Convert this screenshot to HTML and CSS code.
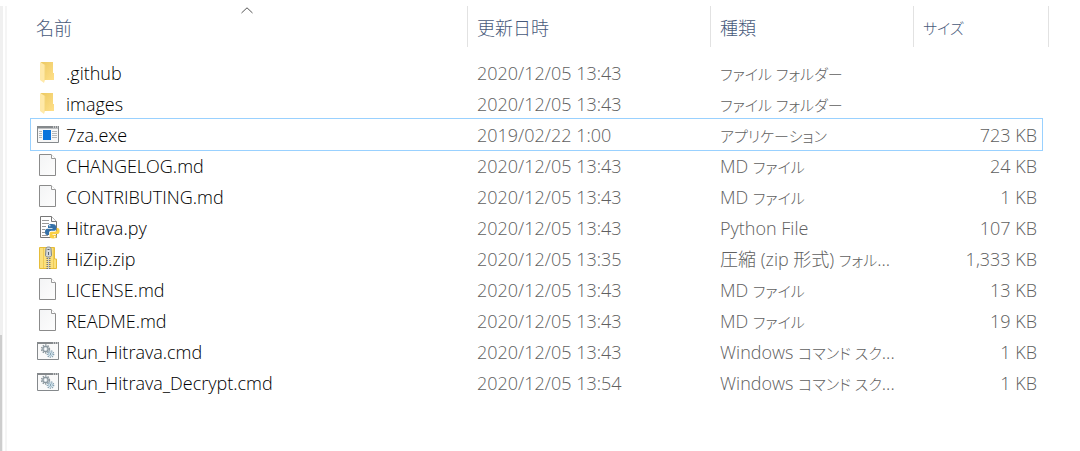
FILE: index.html
```html
<!DOCTYPE html>
<html lang="ja">
<head>
<meta charset="utf-8">
<title>ファイル一覧</title>
<link rel="stylesheet" href="styles.css">
</head>
<body>
<svg class="sprite" aria-hidden="true">
  <defs>
    <linearGradient id="fold" x1="0" x2="1" y1="0" y2="1"><stop offset="0" stop-color="#ecc962"/><stop offset="1" stop-color="#ffe08a"/></linearGradient>
    <linearGradient id="paper" x1="0" x2="1" y1="0" y2="1"><stop offset="0" stop-color="#f3f4f5"/><stop offset="1" stop-color="#fdfdfd"/></linearGradient>
  </defs>
  <symbol id="folder" viewBox="0 0 24 24">
    <path d="M4 2H16V13H17V20H6Z" fill="url(#fold)"/>
    <path d="M3 2L8 5V20L7 23L3 20Z" fill="#ffe9a9"/>
    <path d="M8 5V20" stroke="#f3d67c" fill="none"/>
  </symbol>
  <symbol id="doc" viewBox="0 0 24 24">
    <path d="M2.500 1.500H14L18.500 6V22.500H2.500Z" fill="url(#paper)" stroke="#8b8b8b"/>
    <path d="M14.500 1.500V5.500H18.500" fill="#fff" stroke="#9a9a9a"/>
  </symbol>
  <symbol id="exe" viewBox="0 0 24 24">
    <path d="M.5 4.500H21.500V20.500H.5Z" fill="#f7f7f7" stroke="#85898c"/>
    <path d="M0 4H22V6.500H0Z" fill="#85898c"/>
    <path d="M16 5h1M18 5h1M20 5h1" stroke="#fff"/>
    <path d="M2 9.500H5M2 11.500H5M2 13.500H5M2 15.500H5M15 9.500H20M15 11.500H20M15 13.500H20M15 15.500H20" stroke="#b5b8ba"/>
    <path d="M6 8H14V18H6Z" fill="#0a74dc"/>
  </symbol>
  <symbol id="py" viewBox="0 0 24 24">
    <path d="M3.500 1.500H14.500L19.500 6.500V22.500H3.500Z" fill="#fff" stroke="#777"/>
    <path d="M14.500 1.500V6.500H19.500" fill="#fff" stroke="#777"/>
    <path d="M5 5.500H12M5 8.500H12M5 11.500H9M5 14.500H8M5 17.500H8M5 20.500H11" stroke="#999"/>
    <path d="M15 9C11.500 9 11 10.200 11 11.500V13H15.500V13.800H10.200C8.500 13.800 8 15.500 8 17C8 18.700 8.700 20 10.200 20H12V17.800C12 16.500 13 15.700 14.200 15.700H17.500C18.600 15.700 19 15 19 14V11.500C19 9.800 17.500 9 15 9Z" fill="#3571a8"/>
    <circle cx="12.800" cy="10.800" r=".7" fill="#fff"/>
    <path d="M16 23.500C19 23.500 19.500 22.500 19.500 21.200V19.700H15.500V19H20.500C22 19 22.600 17.500 22.600 16C22.600 14.200 21.800 13 20.500 13H19.700V14.800C19.700 16 18.800 16.700 17.500 16.700H14.300C13.300 16.700 12.600 17.500 12.600 18.500V21.500C12.600 22.800 13.800 23.500 16 23.500Z" fill="#fbd043"/>
    <circle cx="17.700" cy="21.800" r=".7" fill="#fff"/>
  </symbol>
  <symbol id="zip" viewBox="0 0 24 24">
    <path d="M2.500 1.500H17.500V13H19.500V22.500H2.500Z" fill="#fbe07c" stroke="#e6bd3a"/>
    <path d="M6.500 2V22M16.500 2V22" stroke="#efcb55" fill="none"/>
    <path d="M11.500 10V23" stroke="#777" stroke-width="4" stroke-dasharray="1 1"/>
    <path d="M11.500 10V23" stroke="#ccc" stroke-width="1"/>
    <path d="M9 2.500C9 .5 14 .5 14 2.500L14.500 9.500C14.500 11.500 8.500 11.500 8.500 9.500Z" fill="#d3d8dc" stroke="#7b868f"/>
    <path d="M10.500 3.500H12.500M11.500 6V9" stroke="#58636d" fill="none"/>
  </symbol>
  <symbol id="cmd" viewBox="0 0 24 24">
    <path d="M.5 3.500H21.500V20.500H.5Z" fill="#fafafa" stroke="#85898c"/>
    <path d="M0 3H22V5H0Z" fill="#85898c"/>
    <path d="M16 4h1M18 4h1M20 4h1" stroke="#fff"/>
    <circle cx="8.500" cy="10" r="3.900" fill="none" stroke="#8c989f" stroke-width="1.500" stroke-dasharray="1.500 1"/>
    <circle cx="8.500" cy="10" r="2.600" fill="#dce4e9" stroke="#8c989f" stroke-width="1.300"/>
    <circle cx="8.500" cy="10" r="1" fill="#fff"/>
    <circle cx="13.500" cy="15" r="3.200" fill="none" stroke="#84a0b1" stroke-width="1.300" stroke-dasharray="1.300 .9"/>
    <circle cx="13.500" cy="15" r="2" fill="#d6eaf5" stroke="#a3bdcb"/>
    <circle cx="13.500" cy="15" r=".7" fill="#607887"/>
  </symbol>
</svg>
<div class="window">
  <aside class="nav-edge"><div class="track"><div class="thumb"></div></div><div class="splitter"></div></aside>
  <main class="content">
    <table class="files">
      <thead>
        <tr>
          <th scope="col" aria-sort="ascending"><button class="sort">名前</button><svg class="chevron" viewBox="0 0 12 7" aria-hidden="true"><path d="M.5 6L6 .8L11.500 6" fill="none" stroke="#555"/></svg></th>
          <th scope="col"><button class="sort">更新日時</button></th>
          <th scope="col"><button class="sort">種類</button></th>
          <th scope="col"><button class="sort"><span class="kana">サイズ</span></button></th>
        </tr>
      </thead>
      <tbody>
        <tr><td class="name"><svg class="icon"><use href="#folder"/></svg>.github</td><td>2020/12/05 13:43</td><td><span class="kana">ファイル フォルダー</span></td><td class="size"></td></tr>
        <tr><td class="name"><svg class="icon"><use href="#folder"/></svg>images</td><td>2020/12/05 13:43</td><td><span class="kana">ファイル フォルダー</span></td><td class="size"></td></tr>
        <tr class="focused"><td class="name"><svg class="icon"><use href="#exe"/></svg>7za.exe</td><td>2019/02/22 1:00</td><td><span class="kana">アプリケーション</span></td><td class="size">723 KB</td></tr>
        <tr><td class="name"><svg class="icon"><use href="#doc"/></svg>CHANGELOG.md</td><td>2020/12/05 13:43</td><td>MD <span class="kana">ファイル</span></td><td class="size">24 KB</td></tr>
        <tr><td class="name"><svg class="icon"><use href="#doc"/></svg>CONTRIBUTING.md</td><td>2020/12/05 13:43</td><td>MD <span class="kana">ファイル</span></td><td class="size">1 KB</td></tr>
        <tr><td class="name"><svg class="icon"><use href="#py"/></svg>Hitrava.py</td><td>2020/12/05 13:43</td><td>Python File</td><td class="size">107 KB</td></tr>
        <tr><td class="name"><svg class="icon"><use href="#zip"/></svg>HiZip.zip</td><td>2020/12/05 13:35</td><td>圧縮 (zip 形式) <span class="kana">フォル</span>...</td><td class="size">1,333 KB</td></tr>
        <tr><td class="name"><svg class="icon"><use href="#doc"/></svg>LICENSE.md</td><td>2020/12/05 13:43</td><td>MD <span class="kana">ファイル</span></td><td class="size">13 KB</td></tr>
        <tr><td class="name"><svg class="icon"><use href="#doc"/></svg>README.md</td><td>2020/12/05 13:43</td><td>MD <span class="kana">ファイル</span></td><td class="size">19 KB</td></tr>
        <tr><td class="name"><svg class="icon"><use href="#cmd"/></svg>Run_Hitrava.cmd</td><td>2020/12/05 13:43</td><td>Windows <span class="kana">コマンド スク</span>...</td><td class="size">1 KB</td></tr>
        <tr><td class="name"><svg class="icon"><use href="#cmd"/></svg>Run_Hitrava_Decrypt.cmd</td><td>2020/12/05 13:54</td><td>Windows <span class="kana">コマンド スク</span>...</td><td class="size">1 KB</td></tr>
      </tbody>
    </table>
  </main>
</div>
</body>
</html>
```
FILE: styles.css
```css
* { box-sizing: border-box; }

body {
  margin: 0;
  background: #fff;
  color: #606060;
  font-family: "Open Sans", "Noto Sans CJK JP", sans-serif;
  font-size: 18px;
  font-weight: 300;
  font-feature-settings: "palt";
}

.sprite { position: absolute; width: 0; height: 0; }

.window {
  display: flex;
  min-height: 100vh;
  padding-top: 6px;
}

.nav-edge {
  display: flex;
  gap: 2px;
}

.track {
  display: flex;
  flex-direction: column;
  justify-content: flex-end;
  width: 3px;
  background: #f0f0f0;
}

.thumb {
  width: 2px;
  height: 26%;
  background: #cdcdcd;
}

.splitter { width: 2px; background: #f5f5f5; }

.content {
  flex: 1;
  min-width: 0;
  padding: 0 31px 0 24px;
}

.files, .files thead, .files tbody { display: block; }

.files tr {
  display: grid;
  grid-template-columns: 1fr 243px 203px 136px;
}

.files th {
  position: relative;
  height: 41px;
  padding: 0;
  border-left: 1px solid #e2e2e2;
  font-weight: 300;
}

.files th:first-child { border-left: 0; }
.files th:last-child { border-right: 1px solid #e2e2e2; }

.sort {
  display: block;
  width: 100%;
  height: 100%;
  padding: 0 9px;
  border: 0;
  background: none;
  color: #47597a;
  font: inherit;
  font-feature-settings: inherit;
  text-align: left;
}

th:first-child .sort { padding-left: 5px; }

.kana { font-size: 15px; }

.chevron {
  position: absolute;
  top: 1px;
  left: calc(50% - 8px);
  width: 12px;
  height: 7px;
}

.files tbody { padding: 10px 7px 0 0; }

.files tbody tr {
  grid-template-columns: 1fr 243px 203px 129px;
}

.files td {
  height: 31px;
  padding: 0 0 0 10px;
  line-height: 33px;
  white-space: nowrap;
}

.files td.name {
  display: flex;
  gap: 5px;
  padding-left: 6px;
  color: #000;
}

.files td.size { padding: 0 5px 0 0; text-align: right; }

.focused { outline: 1px solid #99d1ff; }

.icon { width: 24px; height: 24px; margin-top: 3px; }
```
